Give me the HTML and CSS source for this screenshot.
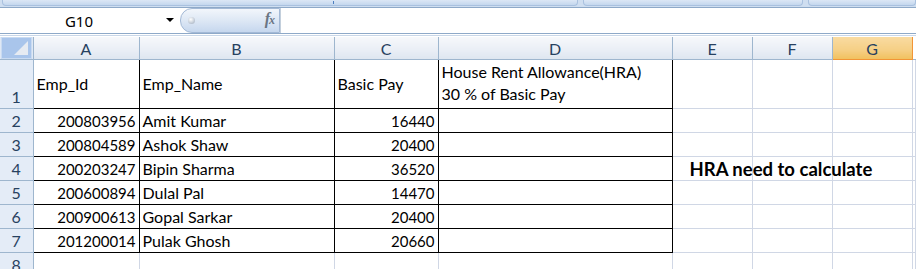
FILE: index.html
```html
<!DOCTYPE html>
<html lang="en">
<head>
    <meta charset="UTF-8">
    <title>HRA sheet</title>
    <link rel="stylesheet" href="styles.css">
</head>
<body>
    <div class="ribbon">
        <div class="group g1"><span class="launcher"></span></div>
        <div class="group g2"></div>
        <div class="group g3"></div>
    </div>

    <div class="formula-bar">
        <div class="name-box">
            <span class="cell-ref">G10</span>
            <span class="arrow"></span>
        </div>
        <div class="fx-button">
            <span class="grip"></span>
            <span class="fx">f<i>x</i></span>
        </div>
        <div class="formula-input"></div>
    </div>
    <div class="bar-gap"></div>

    <table class="sheet">
        <colgroup>
            <col style="width:33px">
            <col style="width:106px">
            <col style="width:195px">
            <col style="width:104px">
            <col style="width:234px">
            <col style="width:80px">
            <col style="width:80px">
            <col style="width:80px">
            <col>
        </colgroup>
        <tr class="col-heads">
            <th class="corner"><div class="corner-box"><span class="tri"></span></div></th>
            <th>A</th>
            <th>B</th>
            <th>C</th>
            <th>D</th>
            <th>E</th>
            <th>F</th>
            <th class="active">G</th>
            <th class="rest"></th>
        </tr>
        <tr class="tall">
            <th class="row-head">1</th>
            <td class="box mid">Emp_Id</td>
            <td class="box mid">Emp_Name</td>
            <td class="box mid">Basic Pay</td>
            <td class="box wrap">House Rent Allowance(HRA)<br>30 % of Basic Pay</td>
            <td></td><td></td><td></td><td></td>
        </tr>
        <tr>
            <th class="row-head">2</th>
            <td class="box num">200803956</td>
            <td class="box">Amit Kumar</td>
            <td class="box num">16440</td>
            <td class="box"></td>
            <td></td><td></td><td></td><td></td>
        </tr>
        <tr>
            <th class="row-head">3</th>
            <td class="box num">200804589</td>
            <td class="box">Ashok Shaw</td>
            <td class="box num">20400</td>
            <td class="box"></td>
            <td></td><td></td><td></td><td></td>
        </tr>
        <tr>
            <th class="row-head">4</th>
            <td class="box num">200203247</td>
            <td class="box">Bipin Sharma</td>
            <td class="box num">36520</td>
            <td class="box"></td>
            <td class="note">HRA need to calculate</td><td></td><td></td><td></td>
        </tr>
        <tr>
            <th class="row-head">5</th>
            <td class="box num">200600894</td>
            <td class="box">Dulal Pal</td>
            <td class="box num">14470</td>
            <td class="box"></td>
            <td></td><td></td><td></td><td></td>
        </tr>
        <tr>
            <th class="row-head">6</th>
            <td class="box num">200900613</td>
            <td class="box">Gopal Sarkar</td>
            <td class="box num">20400</td>
            <td class="box"></td>
            <td></td><td></td><td></td><td></td>
        </tr>
        <tr>
            <th class="row-head">7</th>
            <td class="box num">201200014</td>
            <td class="box">Pulak Ghosh</td>
            <td class="box num">20660</td>
            <td class="box"></td>
            <td></td><td></td><td></td><td></td>
        </tr>
        <tr>
            <th class="row-head">8</th>
            <td></td><td></td><td></td><td></td>
            <td></td><td></td><td></td><td></td>
        </tr>
    </table>
</body>
</html>
```

FILE: styles.css
```css
body {
    margin: 0;
    background-color: #ffffff;
    font-family: Lato, "Open Sans", sans-serif;
    overflow: hidden;
}

/* ribbon edge at the very top */
.ribbon {
    height: 7px;
    background-color: #cfdef0;
    border-bottom: 1px solid #8ea9c8;
    display: flex;
    gap: 5px;
    padding-left: 2px;
}

.group {
    height: 5px;
    background: linear-gradient(#dce7f5, #c4d7ee);
    border: 1px solid #a9c1df;
    border-top: none;
    border-radius: 0 0 4px 4px;
    position: relative;
}

.g1 { width: 574px; }
.g2 { width: 218px; }
.g3 { flex: 1; }

.launcher {
    position: absolute;
    left: 330px;
    top: 1px;
    width: 1px;
    height: 3px;
    background-color: #4c7fc0;
}

/* name box + formula bar */
.formula-bar {
    display: flex;
    height: 25px;
    background-color: #ffffff;
}

.name-box {
    width: 180px;
    position: relative;
    display: flex;
    align-items: center;
    justify-content: center;
}

.cell-ref {
    font-family: "Noto Sans", sans-serif;
    font-size: 15px;
    color: #000000;
    margin-left: -22px;
}

.arrow {
    position: absolute;
    left: 166px;
    top: 10px;
    width: 0;
    height: 0;
    border-left: 4px solid transparent;
    border-right: 4px solid transparent;
    border-top: 4px solid #000000;
}

.fx-button {
    width: 100px;
    height: 25px;
    box-sizing: border-box;
    border: 1px solid #a3b9d6;
    border-radius: 12px 0 0 12px;
    background: linear-gradient(#f2f6fb, #dbe6f4 55%, #c6d7ee);
    position: relative;
}

.grip {
    position: absolute;
    left: 7px;
    top: 8px;
    width: 7px;
    height: 7px;
    border-radius: 50%;
    background: radial-gradient(circle at 40% 35%, #ffffff, #b8c2cf 70%);
}

.fx {
    position: absolute;
    right: 5px;
    top: 1px;
    font-family: "Liberation Serif", serif;
    font-style: italic;
    font-weight: bold;
    font-size: 16px;
    color: #6a7584;
    letter-spacing: -1px;
}

.fx i {
    font-size: 12px;
}

.formula-input {
    flex: 1;
    border-left: 1px solid #c3cfdc;
}

.bar-gap {
    height: 1px;
    border-top: 1px solid #8ea9c8;
    border-bottom: 1px solid #c9d7e8;
    margin-bottom: 1px;
}

/* the sheet */
.sheet {
    border-collapse: collapse;
    table-layout: fixed;
    width: 916px;
    font-family: Lato, "Open Sans", sans-serif;
    font-size: 16px;
}

.sheet td {
    height: 22px;
    border: 1px solid #d0d7e5;
    padding: 0 3px 1px 3px;
    vertical-align: bottom;
    white-space: nowrap;
    overflow: visible;
    line-height: 20px;
    color: #000000;
}

.col-heads th {
    height: 22px;
    border: 1px solid #9eb6ce;
    border-top: none;
    background: linear-gradient(#f6f8fb, #e9eef5 60%, #dee6f0);
    color: #27415f;
    font-weight: normal;
    font-size: 16px;
    padding: 0;
}

.col-heads th.active {
    background: linear-gradient(#f9dba1, #f5cf85 60%, #f1c15f);
    border: 1px solid #f29536;
    border-top: none;
}

.col-heads th.rest {
    border-right: none;
    background: #ffffff;
}

.col-heads th.corner {
    background: #dfe8f4;
    border-left: none;
}

.corner-box {
    height: 22px;
    margin: 0 1px;
    background-color: #a9c5eb;
    border: 1px solid #c9dbf2;
    box-sizing: border-box;
    position: relative;
}

.tri {
    position: absolute;
    right: 3px;
    bottom: 3px;
    width: 0;
    height: 0;
    border-left: 14px solid transparent;
    border-bottom: 14px solid #e6ebf2;
}

.row-head {
    border: 1px solid #9eb6ce;
    border-left: none;
    background-color: #e4ecf7;
    color: #27415f;
    font-weight: normal;
    font-size: 16px;
    vertical-align: bottom;
    padding: 0 0 1px 0;
    line-height: 20px;
}

.tall td,
.tall th {
    height: 46px;
}

.sheet td.box {
    border: 1px solid #000000;
}

.sheet td.num {
    font-size: 15px;
    text-align: right;
}

.sheet td.mid {
    vertical-align: middle;
}

.sheet td.wrap {
    vertical-align: top;
    padding-top: 1px;
    line-height: 22px;
}

.sheet td.note {
    padding-left: 17px;
    font-size: 18.5px;
    font-weight: bold;
}
```
